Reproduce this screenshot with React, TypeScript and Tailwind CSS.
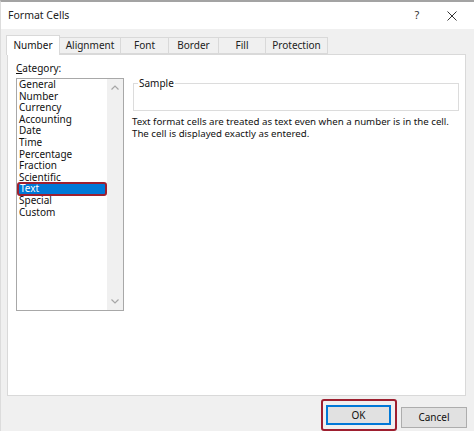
import React from "react";

const items = [
  "General",
  "Number",
  "Currency",
  "Accounting",
  "Date",
  "Time",
  "Percentage",
  "Fraction",
  "Scientific",
  "Text",
  "Special",
  "Custom",
];

const tabs = ["Number", "Alignment", "Font", "Border", "Fill", "Protection"];
const tabWidths = ["w-[54px]", "w-[61px]", "w-[48px]", "w-[50px]", "w-[47px]", "w-[62px]"];

export default function App() {
  return (
    <div
      className="w-[474px] h-[431px] bg-[#f0f0f0] border-t-2 border-t-[#a3a3a3] border-l border-l-[#dcdcdc] flex flex-col text-[#111] overflow-hidden"
      style={{ fontFamily: '"Noto Sans", "Segoe UI", sans-serif' }}
    >
      {/* Title bar */}
      <div className="h-[27px] bg-white flex items-center pl-[7px] shrink-0">
        <span className="text-[10.5px] text-[#222]">Format Cells</span>
        <div className="ml-auto flex items-center">
          <span className="text-[11px] text-[#333] w-[20px] text-center mr-[20px]">?</span>
          <svg width="10" height="10" viewBox="0 0 10 10" className="mr-[17px]">
            <path d="M0.5 0.5 L9.5 9.5 M9.5 0.5 L0.5 9.5" stroke="#333" strokeWidth="1" />
          </svg>
        </div>
      </div>

      {/* Tabs */}
      <div className="flex items-end pl-[5px] mt-[6px] h-[19px] shrink-0 relative z-10">
        {tabs.map((t, i) =>
          i === 0 ? (
            <div
              key={t}
              className={`${tabWidths[i]} h-[20px] bg-white border border-b-0 border-[#d9d9d9] flex items-center justify-center text-[10px] -mb-px`}
            >
              {t}
            </div>
          ) : (
            <div
              key={t}
              className={`${tabWidths[i]} h-[17px] bg-[#f0f0f0] border border-l-0 border-[#d9d9d9] flex items-center justify-center text-[10px] text-[#222]`}
            >
              {t}
            </div>
          )
        )}
      </div>

      {/* Panel */}
      <div className="ml-[6px] w-[459px] h-[342px] bg-white border border-[#d9d9d9] flex pl-[8px] pt-[7px] shrink-0">
        {/* Left column */}
        <div className="flex flex-col w-[108px]">
          <div className="text-[10px] leading-[12px] h-[14px]">
            <span className="underline underline-offset-1">C</span>ategory:
          </div>
          <div className="mt-[2px] w-[108px] h-[233px] border border-[#a8a8a8] flex">
            <div className="flex-1 flex flex-col text-[10px] leading-[11.6px]">
              {items.map((it) =>
                it === "Text" ? (
                  <div
                    key={it}
                    className="h-[13.6px] -my-[1px] border-2 border-[#9e1f2f] rounded-[3px] bg-[#0078d7] text-white pl-[1px] leading-[9.6px]"
                  >
                    {it}
                  </div>
                ) : (
                  <div key={it} className="pl-[2px] h-[11.6px]">
                    {it}
                  </div>
                )
              )}
            </div>
            <div className="w-[16px] bg-[#f0f0f0] flex flex-col items-center justify-between py-[6px]">
              <svg width="8" height="5" viewBox="0 0 8 5">
                <path d="M0.5 4.5 L4 1 L7.5 4.5" stroke="#a6a6a6" strokeWidth="1.2" fill="none" />
              </svg>
              <svg width="8" height="5" viewBox="0 0 8 5">
                <path d="M0.5 0.5 L4 4 L7.5 0.5" stroke="#a6a6a6" strokeWidth="1.2" fill="none" />
              </svg>
            </div>
          </div>
        </div>

        {/* Right column */}
        <div className="flex flex-col ml-[8px] w-[328px]">
          <div className="mt-[21px] ml-[1px] w-[326px] h-[28px] border border-[#dcdcdc] relative">
            <span className="absolute -top-[7px] left-[4px] bg-white px-[1px] text-[10px] leading-[12px]">
              Sample
            </span>
          </div>
          <div className="mt-[5px] text-[9.7px] leading-[11.5px]">
            <div>Text format cells are treated as text even when a number is in the cell.</div>
            <div>The cell is displayed exactly as entered.</div>
          </div>
        </div>
      </div>

      {/* Footer */}
      <div className="flex justify-end items-start pr-[7px] pt-[3px] shrink-0">
        <div className="border-2 border-[#9e1f2f] rounded-[3px] pl-[3px] pr-[4px] py-[4px] mr-[4px]">
          <button className="w-[65px] h-[20px] bg-[#e1e1e1] border-2 border-[#0078d7] text-[10px] flex items-center justify-center">
            OK
          </button>
        </div>
        <button className="mt-[8px] w-[66px] h-[21px] bg-[#e1e1e1] border border-[#adadad] text-[10px] flex items-center justify-center">
          Cancel
        </button>
      </div>
    </div>
  );
}
